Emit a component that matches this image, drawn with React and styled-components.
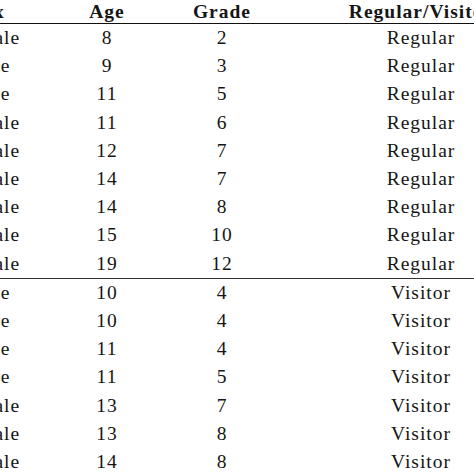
import React from 'react';
import styled, { createGlobalStyle } from 'styled-components';

const GlobalStyle = createGlobalStyle`
  html, body {
    margin: 0;
    padding: 0;
    background: #fff;
    overflow: hidden;
  }
  body {
    width: 474px;
    height: 474px;
  }
`;

const Table = styled.table`
  border-collapse: collapse;
  table-layout: fixed;
  width: 635px;
  margin-left: -72px;
  font-family: "Liberation Serif", "Times New Roman", serif;
  font-size: 19.5px;
  letter-spacing: 1px;
  color: #151515;
`;

const HeadCell = styled.th`
  height: 22px;
  padding: 0 0 1px;
  font-weight: bold;
  text-align: center;
  vertical-align: bottom;
  line-height: 20px;
  border-bottom: 1.5px solid #111;
  white-space: nowrap;
`;

const Row = styled.tr`
  border-top: ${(p) => (p.$break ? '1.5px solid #333' : 'none')};
`;

const Cell = styled.td`
  height: 28.2px;
  padding: 0;
  text-align: center;
  vertical-align: middle;
  line-height: 20px;
  white-space: nowrap;
`;

const columns = [
  { label: 'Sex', width: 121 },
  { label: 'Age', width: 116 },
  { label: 'Grade', width: 114 },
  { label: 'Regular/Visitor', width: 284 },
];

const rows = [
  ['Female', 8, 2, 'Regular'],
  ['Male', 9, 3, 'Regular'],
  ['Male', 11, 5, 'Regular'],
  ['Female', 11, 6, 'Regular'],
  ['Female', 12, 7, 'Regular'],
  ['Female', 14, 7, 'Regular'],
  ['Female', 14, 8, 'Regular'],
  ['Female', 15, 10, 'Regular'],
  ['Female', 19, 12, 'Regular'],
  ['Male', 10, 4, 'Visitor'],
  ['Male', 10, 4, 'Visitor'],
  ['Male', 11, 4, 'Visitor'],
  ['Male', 11, 5, 'Visitor'],
  ['Female', 13, 7, 'Visitor'],
  ['Female', 13, 8, 'Visitor'],
  ['Female', 14, 8, 'Visitor'],
];

export default function App() {
  return (
    <>
      <GlobalStyle />
      <Table>
        <colgroup>
          {columns.map((c) => (
            <col key={c.label} style={{ width: c.width }} />
          ))}
        </colgroup>
        <thead>
          <tr>
            {columns.map((c) => (
              <HeadCell key={c.label}>{c.label}</HeadCell>
            ))}
          </tr>
        </thead>
        <tbody>
          {rows.map((r, i) => (
            <Row key={i} $break={i > 0 && r[3] !== rows[i - 1][3]}>
              {r.map((v, j) => (
                <Cell key={j}>{v}</Cell>
              ))}
            </Row>
          ))}
        </tbody>
      </Table>
    </>
  );
}
